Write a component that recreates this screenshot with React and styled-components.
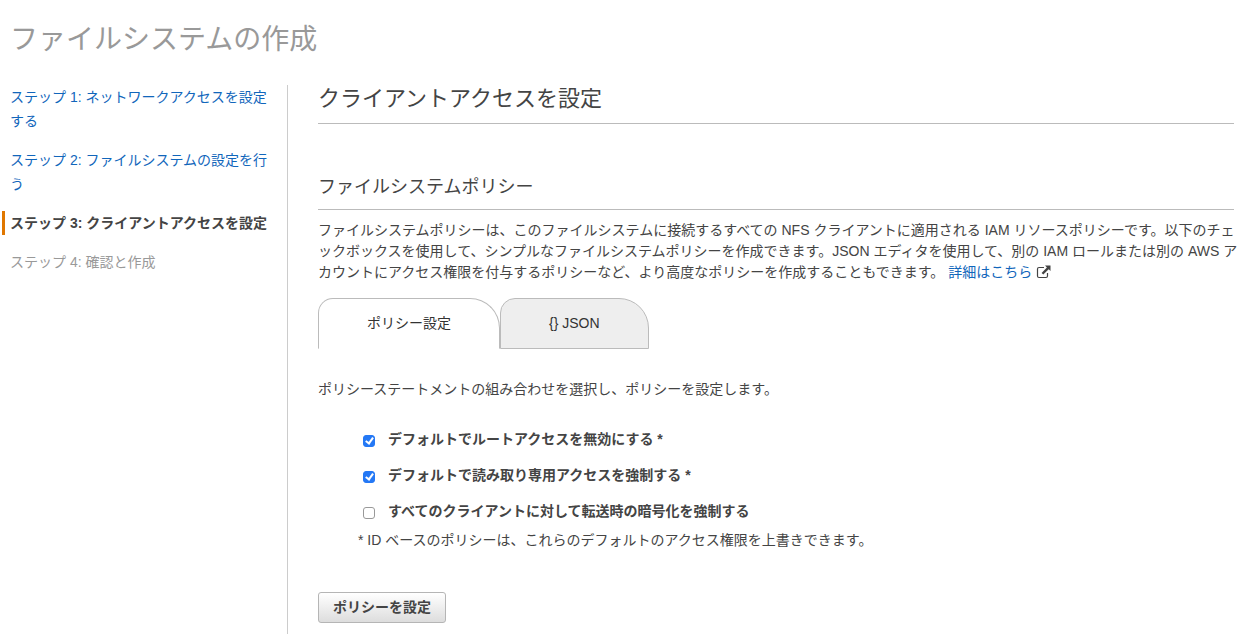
import React from 'react';
import styled, { createGlobalStyle } from 'styled-components';

const GlobalStyle = createGlobalStyle`
  *,
  *::after {
    box-sizing: border-box;
  }

  body {
    margin: 0;
    background: #fff;
    color: #444;
    font-family: "Liberation Sans", "Noto Sans CJK JP", sans-serif;
    font-size: 14px;
    line-height: 21px;
  }
`;

const Page = styled.div`
  display: flex;
  flex-direction: column;
  min-height: 100vh;
`;

const PageTitle = styled.h1`
  margin: 0;
  padding: 20px 10px 25px;
  color: #999;
  font-size: 28px;
  font-weight: normal;
  line-height: 40px;
`;

const Columns = styled.div`
  display: flex;
  flex: 1;
`;

const Steps = styled.nav`
  flex: 0 0 288px;
  border-right: 1px solid #ccc;
`;

const StepList = styled.ol`
  display: flex;
  flex-direction: column;
  gap: 15px;
  margin: 0;
  padding: 0 16px 0 2px;
  list-style: none;
`;

const Step = styled.li`
  padding-left: 5px;
  border-left: 3px solid ${({ $active }) => ($active ? '#e07700' : 'transparent')};
  color: ${({ $active }) => ($active ? '#444' : '#999')};
  font-weight: ${({ $active }) => ($active ? 'bold' : 'normal')};
  line-height: 24px;
`;

const Link = styled.a`
  color: #1166bb;
  text-decoration: none;
`;

const Content = styled.main`
  flex: 1;
  min-width: 0;
  padding: 0 17px 11px 30px;
`;

const SectionTitle = styled.h2`
  margin: 0 0 48px;
  padding-bottom: 11px;
  border-bottom: 1px solid #bbb;
  font-size: 22px;
  font-weight: normal;
  line-height: 27px;
`;

const SubTitle = styled.h3`
  margin: 0 0 10px;
  padding-bottom: 7px;
  border-bottom: 1px solid #bbb;
  font-size: 18px;
  font-weight: normal;
  line-height: 30px;
`;

const Text = styled.p`
  margin: 0;
`;

const Description = styled(Text)`
  margin-right: -8px;
`;

const ExternalIcon = styled.svg`
  width: 15px;
  height: 14px;
  margin-left: 4px;
  vertical-align: -2px;
`;

const Tabs = styled.div`
  display: flex;
  margin: 15px 0 30px;
`;

const Tab = styled.button`
  height: 51px;
  padding: 0 48px;
  border: 1px solid #bbb;
  border-bottom-color: ${({ $active }) => ($active ? 'transparent' : '#bbb')};
  border-radius: 15px 30px 0 0;
  background: ${({ $active }) => ($active ? '#fff' : '#eee')};
  color: #333;
  font: inherit;
`;

const Options = styled.div`
  display: flex;
  flex-direction: column;
  gap: 15px;
  padding: 29px 0 8px 45px;
`;

const Option = styled.label`
  display: flex;
  align-items: center;
  gap: 13px;
  font-weight: bold;
`;

const Checkbox = styled.input`
  display: grid;
  place-items: center;
  flex: none;
  appearance: none;
  width: 12px;
  height: 12px;
  margin: 2px 0 0;
  border: 1px solid #999;
  border-radius: 3px;
  background: #fff;

  &:checked {
    border-color: #2478f5;
    background: #2478f5;
  }

  &:checked::after {
    content: "";
    width: 5px;
    height: 8px;
    margin-bottom: 2px;
    border: solid #fff;
    border-width: 0 2px 2px 0;
    transform: rotate(36deg);
  }
`;

const Note = styled(Text)`
  padding-left: 40px;
`;

const Button = styled.button`
  height: 31px;
  margin-top: 41px;
  padding: 0 14px;
  border: 1px solid #b5b5b5;
  border-radius: 3px;
  background: linear-gradient(#fff, #ddd);
  color: #444;
  font: inherit;
  font-weight: bold;
`;

const steps = [
  { label: 'ステップ 1: ネットワークアクセスを設定する', done: true },
  { label: 'ステップ 2: ファイルシステムの設定を行う', done: true },
  { label: 'ステップ 3: クライアントアクセスを設定', active: true },
  { label: 'ステップ 4: 確認と作成' },
];

const options = [
  { id: 'root-access', label: 'デフォルトでルートアクセスを無効にする *', checked: true },
  { id: 'read-only', label: 'デフォルトで読み取り専用アクセスを強制する *', checked: true },
  { id: 'encryption', label: 'すべてのクライアントに対して転送時の暗号化を強制する', checked: false },
];

function External() {
  return (
    <ExternalIcon viewBox="0 0 15 14" fill="none" aria-hidden="true">
      <path d="M8 2.5H3Q1.5 2.5 1.5 4V11Q1.5 12.5 3 12.5H10Q11.5 12.5 11.5 11V8" stroke="#444" strokeWidth="1.2" />
      <path d="M9 0.5H14.5V6L12.7 4.3L7.3 9.6L5.6 7.9L10.9 2.5Z" fill="#444" />
    </ExternalIcon>
  );
}

export default function App() {
  return (
    <>
      <GlobalStyle />
      <Page>
        <PageTitle>ファイルシステムの作成</PageTitle>
        <Columns>
          <Steps>
            <StepList>
              {steps.map((step) => (
                <Step key={step.label} $active={step.active}>
                  {step.done ? <Link href="#">{step.label}</Link> : step.label}
                </Step>
              ))}
            </StepList>
          </Steps>
          <Content>
            <SectionTitle>クライアントアクセスを設定</SectionTitle>
            <SubTitle>ファイルシステムポリシー</SubTitle>
            <Description>
              ファイルシステムポリシーは、このファイルシステムに接続するすべての NFS クライアントに適用される IAM リソースポリシーです。以下のチェックボックスを使用して、シンプルなファイルシステムポリシーを作成できます。JSON エディタを使用して、別の IAM ロールまたは別の AWS アカウントにアクセス権限を付与するポリシーなど、より高度なポリシーを作成することもできます。{' '}
              <Link href="#">詳細はこちら</Link>
              <External />
            </Description>
            <Tabs role="tablist">
              <Tab type="button" role="tab" aria-selected="true" $active>ポリシー設定</Tab>
              <Tab type="button" role="tab" aria-selected="false">{'{} JSON'}</Tab>
            </Tabs>
            <Text>ポリシーステートメントの組み合わせを選択し、ポリシーを設定します。</Text>
            <Options>
              {options.map((option) => (
                <Option key={option.id} htmlFor={option.id}>
                  <Checkbox type="checkbox" id={option.id} defaultChecked={option.checked} />
                  {option.label}
                </Option>
              ))}
            </Options>
            <Note>* ID ベースのポリシーは、これらのデフォルトのアクセス権限を上書きできます。</Note>
            <Button type="button">ポリシーを設定</Button>
          </Content>
        </Columns>
      </Page>
    </>
  );
}
